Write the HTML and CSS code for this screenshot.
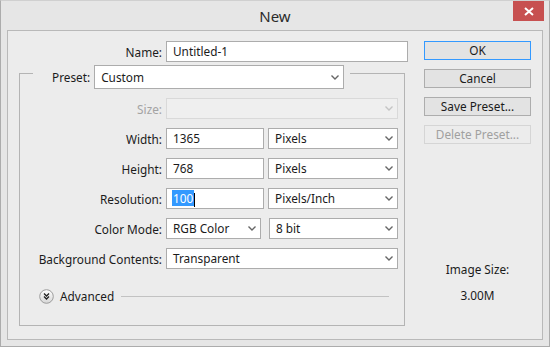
FILE: index.html
```html
<!DOCTYPE html>
<html lang="en">
<head>
    <meta charset="UTF-8">
    <title>New</title>
    <link rel="stylesheet" href="styles.css">
</head>
<body>
    <div class="window">
        <div class="titlebar">
            <div></div>
            <div class="title">New</div>
            <div class="close">
                <svg width="10" height="9" viewBox="0 0 10 9"><path d="M1 1 L9 8 M9 1 L1 8" stroke="#fff" stroke-width="2"/></svg>
            </div>
        </div>

        <div class="panel">
            <div class="form">
                <div class="row name-row">
                    <div class="label name-label">Name:</div>
                    <div class="field name-field">Untitled-1</div>
                </div>

                <div class="group">
                    <div class="group-head">
                        <div class="label">Preset:</div>
                        <div class="field select preset-select">
                            <span>Custom</span>
                            <svg class="chev" width="8" height="5" viewBox="0 0 8 5"><path d="M0.5 0.5 L4 4 L7.5 0.5" fill="none" stroke="#666" stroke-width="1.4"/></svg>
                        </div>
                    </div>

                    <div class="rows">
                        <div class="row">
                            <div class="label disabled">Size:</div>
                            <div class="field select wide off">
                                <span></span>
                                <svg class="chev" width="8" height="5" viewBox="0 0 8 5"><path d="M0.5 0.5 L4 4 L7.5 0.5" fill="none" stroke="#c4c4c4" stroke-width="1.4"/></svg>
                            </div>
                        </div>
                        <div class="row">
                            <div class="label">Width:</div>
                            <div class="field num">1365</div>
                            <div class="field select unit">
                                <span>Pixels</span>
                                <svg class="chev" width="8" height="5" viewBox="0 0 8 5"><path d="M0.5 0.5 L4 4 L7.5 0.5" fill="none" stroke="#666" stroke-width="1.4"/></svg>
                            </div>
                        </div>
                        <div class="row">
                            <div class="label">Height:</div>
                            <div class="field num">768</div>
                            <div class="field select unit">
                                <span>Pixels</span>
                                <svg class="chev" width="8" height="5" viewBox="0 0 8 5"><path d="M0.5 0.5 L4 4 L7.5 0.5" fill="none" stroke="#666" stroke-width="1.4"/></svg>
                            </div>
                        </div>
                        <div class="row">
                            <div class="label">Resolution:</div>
                            <div class="field num"><span class="sel">100</span><span class="caret"></span></div>
                            <div class="field select unit">
                                <span>Pixels/Inch</span>
                                <svg class="chev" width="8" height="5" viewBox="0 0 8 5"><path d="M0.5 0.5 L4 4 L7.5 0.5" fill="none" stroke="#666" stroke-width="1.4"/></svg>
                            </div>
                        </div>
                        <div class="row">
                            <div class="label">Color Mode:</div>
                            <div class="field select mode">
                                <span>RGB Color</span>
                                <svg class="chev" width="8" height="5" viewBox="0 0 8 5"><path d="M0.5 0.5 L4 4 L7.5 0.5" fill="none" stroke="#666" stroke-width="1.4"/></svg>
                            </div>
                            <div class="field select depth">
                                <span>8 bit</span>
                                <svg class="chev" width="8" height="5" viewBox="0 0 8 5"><path d="M0.5 0.5 L4 4 L7.5 0.5" fill="none" stroke="#666" stroke-width="1.4"/></svg>
                            </div>
                        </div>
                        <div class="row">
                            <div class="label">Background Contents:</div>
                            <div class="field select wide">
                                <span>Transparent</span>
                                <svg class="chev" width="8" height="5" viewBox="0 0 8 5"><path d="M0.5 0.5 L4 4 L7.5 0.5" fill="none" stroke="#666" stroke-width="1.4"/></svg>
                            </div>
                        </div>
                    </div>

                    <div class="advanced">
                        <svg width="15" height="15" viewBox="0 0 15 15">
                            <defs>
                                <linearGradient id="adv" x1="0" y1="0" x2="0" y2="1">
                                    <stop offset="0" stop-color="#ffffff"/>
                                    <stop offset="1" stop-color="#d6d6d6"/>
                                </linearGradient>
                            </defs>
                            <circle cx="7.5" cy="7.5" r="6.8" fill="url(#adv)" stroke="#9c9c9c"/>
                            <path d="M5 4.5 L7.5 7 L10 4.5 M5 7.5 L7.5 10 L10 7.5" fill="none" stroke="#222" stroke-width="1.3"/>
                        </svg>
                        <span>Advanced</span>
                        <div class="rule"></div>
                    </div>
                </div>
            </div>

            <div class="side">
                <div class="btn default">OK</div>
                <div class="btn">Cancel</div>
                <div class="btn">Save Preset...</div>
                <div class="btn off">Delete Preset...</div>

                <div class="image-size">
                    <p>Image Size:</p>
                    <p>3.00M</p>
                </div>
            </div>
        </div>
    </div>
</body>
</html>
```

FILE: styles.css
```css
body {
    margin: 0;
    padding: 0;
    font-family: "Noto Sans", "Open Sans", sans-serif;
    font-size: 11.8px;
    color: #1b1b1b;
    background: #e6e6e6;
}

.window {
    width: 550px;
    height: 347px;
    box-sizing: border-box;
    border: 1px solid #acacac;
    border-top-color: #d0d0d0;
    background: #e6e6e6;
    display: flex;
    flex-direction: column;
}

.titlebar {
    height: 29px;
    display: grid;
    grid-template-columns: 1fr auto 1fr;
}

.title {
    font-size: 15px;
    color: #2b2b2b;
    line-height: 29px;
    padding-top: 1px;
}

.close {
    justify-self: end;
    width: 31px;
    height: 20px;
    margin-right: 5px;
    background: #c75050;
    display: flex;
    align-items: center;
    justify-content: center;
}

.panel {
    height: 310px;
    margin: 0 6px;
    box-sizing: border-box;
    border: 1px solid #b9b9b9;
    background: #ececec;
    display: flex;
}

.form {
    width: 400px;
}

.row {
    display: flex;
    align-items: center;
    gap: 4px;
    height: 21px;
}

.label {
    text-align: right;
    white-space: nowrap;
}

.label.disabled {
    color: #a3a3a3;
}

.name-row {
    margin-top: 10px;
}

.name-label {
    width: 154px;
}

.field {
    box-sizing: border-box;
    height: 21px;
    border: 1px solid #acacac;
    background: #fff;
    padding: 0 6px;
    line-height: 19px;
    white-space: nowrap;
}

.name-field {
    width: 242px;
}

.select {
    display: flex;
    align-items: center;
    justify-content: space-between;
    padding-right: 4px;
}

.chev {
    flex: none;
}

.group {
    margin: 11px 0 0 11px;
    width: 386px;
    height: 253px;
    box-sizing: border-box;
    border: 1px solid #b4b4b4;
}

.group-head {
    display: flex;
    width: fit-content;
    align-items: center;
    gap: 4px;
    margin: -9px 0 0 13px;
    padding: 0 6px 0 19px;
    background: #ececec;
}

.preset-select {
    width: 250px;
    height: 24px;
    line-height: 22px;
}

.rows {
    display: flex;
    flex-direction: column;
    gap: 9px;
    margin-top: 9px;
}

.rows .label {
    width: 142px;
}

.wide {
    width: 232px;
}

.wide.off {
    background: #efefef;
    border-color: #d9d9d9;
}

.num {
    width: 98px;
}

.unit {
    width: 130px;
}

.mode {
    width: 95px;
}

.depth {
    width: 129px;
    margin-left: 4px;
}

.sel {
    background: #3399ff;
    color: #fff;
    padding: 0 1px;
    margin-left: -1px;
}

.caret {
    display: inline-block;
    width: 1px;
    height: 14px;
    background: #000;
    vertical-align: middle;
}

.advanced {
    display: flex;
    align-items: center;
    gap: 6px;
    margin: 19px 0 0 19px;
    padding-right: 15px;
}

.advanced .rule {
    flex: 1;
    height: 1px;
    background: #c2c2c2;
    margin-left: 1px;
}

.side {
    width: 107px;
    margin-left: 16px;
    display: flex;
    flex-direction: column;
    gap: 9px;
}

.btn {
    height: 19px;
    box-sizing: border-box;
    border: 1px solid #adadad;
    background: #e3e3e3;
    text-align: center;
    line-height: 17px;
}

.btn:first-child {
    margin-top: 10px;
}

.btn.default {
    border-color: #3399ff;
}

.btn.off {
    color: #a0a0a0;
    border-color: #d5d5d5;
    background: #ececec;
}

.image-size {
    margin-top: 109px;
    text-align: center;
}

.image-size p {
    margin: 0 0 12px;
    line-height: 14px;
}
```
